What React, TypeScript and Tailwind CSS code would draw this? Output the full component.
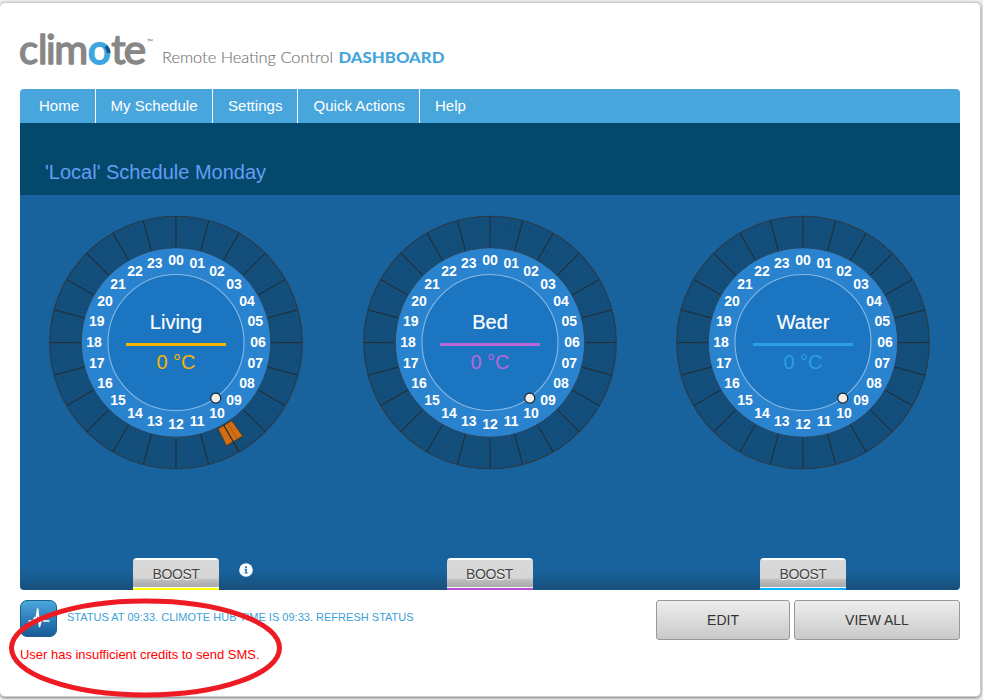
import React from 'react';

type Zone = {
  name: string;
  temp: string;
  color: string;
  boostBorder: string;
  slot?: [number, number];
  info?: boolean;
};

const menu = [
  { label: 'Home', width: 'w-[76px] pl-[19px]' },
  { label: 'My Schedule', width: 'w-[117px] pl-[14.5px]' },
  { label: 'Settings', width: 'w-[85px] pl-[15px]' },
  { label: 'Quick Actions', width: 'w-[122px] pl-[15.5px]' },
];

const zones: Zone[] = [
  { name: 'Living', temp: '0 °C', color: '#f7b500', boostBorder: 'border-[#ffff00]', slot: [144.5, 154], info: true },
  { name: 'Bed', temp: '0 °C', color: '#b967d8', boostBorder: 'border-[#b84fd8]' },
  { name: 'Water', temp: '0 °C', color: '#2a9fe6', boostBorder: 'border-[#00b4ff]' },
];

const C = 127;

// Angle in degrees, clockwise from midnight
function point(r: number, deg: number) {
  const a = (deg * Math.PI) / 180;
  return { x: C + r * Math.sin(a), y: C - r * Math.cos(a) };
}

function slotPath(from: number, to: number) {
  const a = point(96, from);
  const b = point(115, from);
  const c = point(115, to);
  const d = point(96, to);
  return `M${a.x} ${a.y}L${b.x} ${b.y}L${c.x} ${c.y}L${d.x} ${d.y}Z`;
}

function Dial({ zone }: { zone: Zone }) {
  const ticks = Array.from({ length: 144 }, (_, i) => i);
  const hours = Array.from({ length: 24 }, (_, i) => i);
  const now = point(68, 144.2);

  return (
    <svg width="254" height="254" viewBox="0 -0.5 254 254" className="block overflow-visible font-['Liberation_Sans',Arial,sans-serif]">
      <circle cx={C} cy={C} r="126.3" fill="#134f7d" stroke="#2b3a45" strokeWidth="1.1" />
      {ticks.map((i) => {
        const a = point(95, i * 2.5);
        const b = point(126, i * 2.5);
        const major = i % 6 === 0;
        return (
          <line
            key={i}
            x1={a.x}
            y1={a.y}
            x2={b.x}
            y2={b.y}
            stroke={major ? '#22303a' : '#1c4261'}
            strokeWidth={major ? 1.2 : 0.35}
          />
        );
      })}
      {zone.slot && (
        <g stroke="#3a2c1a">
          <path d={slotPath(zone.slot[0], zone.slot[1])} fill="#cf6e13" strokeWidth="0.7" />
          <path d={`M${point(96, 147.5).x} ${point(96, 147.5).y}L${point(115, 147.5).x} ${point(115, 147.5).y}`} strokeWidth="0.3" />
          <path d={`M${point(95, 150).x} ${point(95, 150).y}L${point(126, 150).x} ${point(126, 150).y}`} strokeWidth="1.3" />
        </g>
      )}
      <circle cx={C} cy={C} r="94.7" fill="#2a83cf" stroke="#29465d" strokeWidth="1" />
      <circle cx={C} cy={C} r="68" fill="#1b75c1" stroke="#86b9e4" strokeWidth="1.1" />
      {hours.map((h) => {
        const p = point(82, h * 15);
        return (
          <text key={h} x={p.x} y={p.y + 4.5} textAnchor="middle" fontSize="14" fontWeight="700" fill="#fff">
            {String(h).padStart(2, '0')}
          </text>
        );
      })}
      <text x={C} y="113.5" textAnchor="middle" fontSize="20" fill="#fff" stroke="#fff" strokeWidth="0.2">
        {zone.name}
      </text>
      <line x1="77" x2="177" y1="129" y2="129" stroke={zone.color} strokeWidth="3" />
      <text x={C} y="153.5" textAnchor="middle" fontSize="20" fill={zone.color}>
        {zone.temp}
      </text>
      <circle cx={now.x} cy={now.y + 0.5} r="5" fill="#eee" stroke="#222" strokeWidth="1.2" />
    </svg>
  );
}

function BoostButton({ zone }: { zone: Zone }) {
  return (
    <div className="relative w-[254px] flex justify-center">
      <button
        className={`w-[86px] h-8 rounded-t-[4px] border-b-2 bg-[linear-gradient(#fff_0,#fff_2px,#d9d9d9_2px,#d6d6d6_20px,#bebebe_22px,#a9a9a9_29px,#fff_29px)] text-[14px] tracking-[-0.4px] text-[#444] leading-8 ${zone.boostBorder}`}
        style={{ textShadow: '0 1px 0 #fff' }}
      >
        BOOST
      </button>
      {zone.info && (
        <svg width="14" height="14" viewBox="0 0 14 14" className="absolute left-[190px] top-[5px]">
          <circle cx="7" cy="7" r="6.8" fill="#fff" />
          <path d="M6 3.2h2v1.7H6zM5.4 5.8H8v3.6h.8v1.1H5.3V9.4h.8V6.9h-.7z" fill="#3188bd" />
        </svg>
      )}
    </div>
  );
}

function Logo() {
  return (
    <svg width="460" height="72" viewBox="-5 -14 460 72" className="block -ml-[5px]">
      <g fontFamily="Lato, sans-serif" fontSize="40" fill="#878787" stroke="#878787" strokeWidth="1.5" strokeLinejoin="round">
        <text x="-1" y="36.5">c</text>
        <text x="18" y="36.5">l</text>
        <text x="26" y="36.5">i</text>
        <text transform="translate(34.2 36.5) scale(1.03 1)">m</text>
        <text x="68" y="36.5" fill="#3da6df" stroke="#3da6df" strokeWidth="2">o</text>
        <text x="91.2" y="36.5">t</text>
        <text transform="translate(103.8 36.5) scale(1.06 1)">e</text>
      </g>
      <path d="M85.8 19.2q2.8 2.6 2.9 6.8" fill="none" stroke="#12548e" strokeWidth="3.6" />
      <text x="127" y="18" fontFamily="Lato, sans-serif" fontSize="8" fill="#888">™</text>
      <text x="142" y="35.5" fontFamily="Lato, sans-serif" fontWeight="300" fontSize="16" fill="#777" stroke="#777" strokeWidth="0.15" textLength="171" lengthAdjust="spacingAndGlyphs">
        Remote Heating Control
      </text>
      <text x="318.5" y="35.5" fontFamily="Lato, sans-serif" fontWeight="900" fontSize="15.5" fill="#46a6dc" textLength="106" lengthAdjust="spacingAndGlyphs">
        DASHBOARD
      </text>
    </svg>
  );
}

function StatusIcon() {
  return (
    <div className="w-[37px] h-[37px] rounded-[7px] border border-[#17658f] bg-gradient-to-b from-[#4aa7dc] to-[#175b98]">
      <svg width="35" height="35" viewBox="0 0 35 35" fill="none" stroke="#fff" strokeWidth="1.6" strokeLinejoin="round">
        <path d="M7.5 20h4.5l1.8-3.5 1.2 2L16.7 8l1.8 17.5 2.3-9 1.7 3.5h6" />
      </svg>
    </div>
  );
}

export default function App() {
  return (
    <div className="relative w-[983px] h-[700px] overflow-hidden bg-[#eee] pt-[2px] font-['Liberation_Sans',Arial,sans-serif]">
      <div className="w-[981px] h-[695px] bg-white border border-[#ccc] border-l-0 rounded-[5px] shadow-[0_1px_3px_#777] pl-5 pr-5">
        <header className="h-[86px] pt-[10px]">
          <Logo />
        </header>

        <nav className="flex w-[940px] h-[34px] bg-[#48a6dc] rounded-t-[4px] text-[15px] tracking-[0.03px] leading-[34px] text-white">
          {menu.map((item) => (
            <a key={item.label} className={`border-r border-white whitespace-nowrap ${item.width}`}>
              {item.label}
            </a>
          ))}
          <a className="pl-[15px]">Help</a>
        </nav>

        <main className="w-[940px]">
          <h1 className="h-[72px] bg-[#04496b] pl-[25px] pt-[34px] text-[20px] leading-[30px] text-[#639df5]">
            'Local' Schedule Monday
          </h1>
          <section className="h-[395px] rounded-b-[4px] bg-[linear-gradient(#18639d_375px,#174f7c)] pt-[20px] pl-[29px] flex flex-col justify-between">
            <div className="flex gap-[59.5px]">
              {zones.map((z) => (
                <Dial key={z.name} zone={z} />
              ))}
            </div>
            <div className="flex gap-[59.5px]">
              {zones.map((z) => (
                <BoostButton key={z.name} zone={z} />
              ))}
            </div>
          </section>
        </main>

        <footer className="w-[940px] pt-[10px] flex justify-between">
          <div>
            <div className="flex gap-[10px]">
              <StatusIcon />
              <span className="text-[11px] leading-[34px] tracking-[0.015px] text-[#3d9fd8]">
                STATUS AT 09:33. CLIMOTE HUB TIME IS 09:33. REFRESH STATUS
              </span>
            </div>
            <p className="mt-[8px] text-[13px] leading-5 tracking-[-0.02px] text-[#f00]">User has insufficient credits to send SMS.</p>
          </div>
          <div className="flex gap-1 text-[14px] text-[#333]">
            <button className="w-[134px] h-10 border border-[#999] rounded-[3px] bg-gradient-to-b from-[#eee] to-[#c9c9c9]">EDIT</button>
            <button className="w-[166px] h-10 border border-[#999] rounded-[3px] bg-gradient-to-b from-[#eee] to-[#c9c9c9]">VIEW ALL</button>
          </div>
        </footer>
      </div>

      {/* Hand-drawn highlight around the error message */}
      <svg width="290" height="110" viewBox="0 0 290 110" className="absolute left-0 top-[590px] pointer-events-none">
        <ellipse cx="145.5" cy="58" rx="134" ry="47" fill="none" stroke="#ed1c24" strokeWidth="5" />
      </svg>
    </div>
  );
}
